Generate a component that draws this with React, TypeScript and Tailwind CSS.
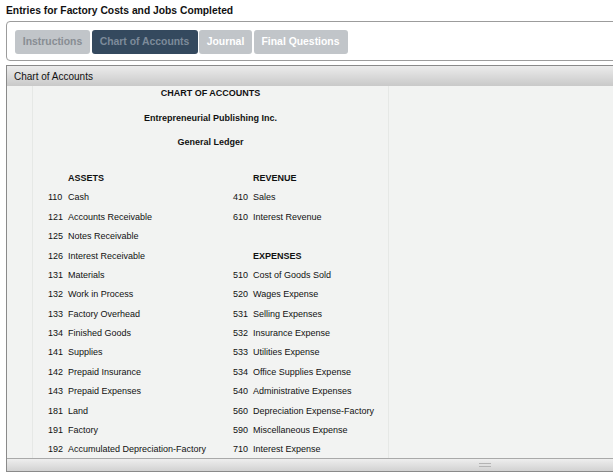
import React from "react";

const tabs = [
  { label: "Instructions", cls: "bg-[#c1c5c9] text-[#888d93] w-[75px]" },
  { label: "Chart of Accounts", cls: "bg-[#34495e] text-[#7d8b9a] w-[106px]" },
  { label: "Journal", cls: "bg-[#c1c5c9] text-white w-[53px]" },
  { label: "Final Questions", cls: "bg-[#c1c5c9] text-white w-[94px]" },
];

type Row = { head?: string; no?: string; name?: string };

const leftRows: Row[] = [
  { head: "ASSETS" },
  { no: "110", name: "Cash" },
  { no: "121", name: "Accounts Receivable" },
  { no: "125", name: "Notes Receivable" },
  { no: "126", name: "Interest Receivable" },
  { no: "131", name: "Materials" },
  { no: "132", name: "Work in Process" },
  { no: "133", name: "Factory Overhead" },
  { no: "134", name: "Finished Goods" },
  { no: "141", name: "Supplies" },
  { no: "142", name: "Prepaid Insurance" },
  { no: "143", name: "Prepaid Expenses" },
  { no: "181", name: "Land" },
  { no: "191", name: "Factory" },
  { no: "192", name: "Accumulated Depreciation-Factory" },
];

const rightRows: Row[] = [
  { head: "REVENUE" },
  { no: "410", name: "Sales" },
  { no: "610", name: "Interest Revenue" },
  {},
  { head: "EXPENSES" },
  { no: "510", name: "Cost of Goods Sold" },
  { no: "520", name: "Wages Expense" },
  { no: "531", name: "Selling Expenses" },
  { no: "532", name: "Insurance Expense" },
  { no: "533", name: "Utilities Expense" },
  { no: "534", name: "Office Supplies Expense" },
  { no: "540", name: "Administrative Expenses" },
  { no: "560", name: "Depreciation Expense-Factory" },
  { no: "590", name: "Miscellaneous Expense" },
  { no: "710", name: "Interest Expense" },
];

function AccountColumn({ rows, width }: { rows: Row[]; width: string }) {
  return (
    <div className={`flex flex-col ${width}`}>
      {rows.map((r, i) => (
        <div key={i} className="flex h-[19.4px] items-center whitespace-nowrap">
          {r.head ? (
            <span className="pl-[20px] font-bold">{r.head}</span>
          ) : r.no ? (
            <>
              <span className="w-[20px]">{r.no}</span>
              <span>{r.name}</span>
            </>
          ) : null}
        </div>
      ))}
    </div>
  );
}

export default function App() {
  return (
    <div
      className="w-[613px] h-[472px] overflow-hidden bg-white text-[#111]"
      style={{ fontFamily: "'Liberation Sans', Arial, sans-serif" }}
    >
      <div className="w-[660px] flex flex-col">
        {/* page title */}
        <div className="pl-[6px] pt-[5px] h-[21px] text-[10.3px] leading-[12px] font-bold">
          Entries for Factory Costs and Jobs Completed
        </div>

        {/* tab strip */}
        <div className="ml-[6px] h-[40px] border border-[#9c9c9c] rounded-[4px] pl-[8px] pt-[8px] flex gap-[1.5px]">
          {tabs.map((t) => (
            <div
              key={t.label}
              className={`h-[24px] rounded-[3px] flex items-center justify-center text-[10.4px] font-bold ${t.cls}`}
            >
              {t.label}
            </div>
          ))}
        </div>

        {/* chart panel */}
        <div className="ml-[6px] mt-[4px] h-[407px] border-l border-t border-b border-[#8a8a8a] flex flex-col">
          <div className="h-[20px] shrink-0 bg-gradient-to-b from-[#ececec] to-[#c9c9c9] flex items-center pl-[7px] text-[10px]">
            Chart of Accounts
          </div>
          <div className="flex-1 bg-[#f2f3f2] overflow-hidden pl-[25px]">
            <div className="w-[357px] h-full border-l border-r border-[#e6e8e6] text-[9px] flex flex-col pt-[1px]">
              <div className="flex flex-col items-center font-bold">
                <div className="h-[14px] flex items-center">CHART OF ACCOUNTS</div>
                <div className="h-[14px] mt-[11px] flex items-center">Entrepreneurial Publishing Inc.</div>
                <div className="h-[14px] mt-[10px] flex items-center">General Ledger</div>
              </div>
              <div className="flex mt-[19px] pl-[15px]">
                <AccountColumn rows={leftRows} width="w-[185px]" />
                <AccountColumn rows={rightRows} width="w-[150px]" />
              </div>
            </div>
          </div>
          <div className="h-[13px] shrink-0 border-t border-[#a9a9a9] bg-gradient-to-b from-[#eeeeee] to-[#d2d2d2] pl-[472px] pt-[4px]">
            <div className="w-[12px] h-[4px] border-t border-b border-[#b4b4b4]" />
          </div>
        </div>
      </div>
    </div>
  );
}
